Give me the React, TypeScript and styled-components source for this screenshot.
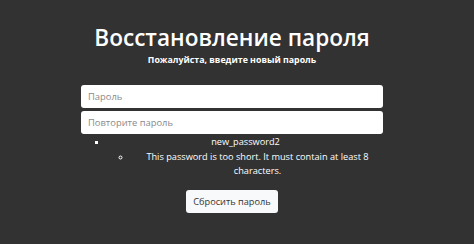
import styled, { createGlobalStyle } from 'styled-components';

const GlobalStyle = createGlobalStyle`
  html, body {
    margin: 0;
    padding: 0;
    background: #323232;
  }
  body {
    font-family: 'Open Sans', 'Noto Sans', sans-serif;
    color: #ffffff;
  }
`;

const Page = styled.main`
  width: 474px;
  height: 244px;
  display: flex;
  justify-content: center;
  padding: 22px 10px 0 0;
  box-sizing: border-box;
`;

const Panel = styled.div`
  width: 302px;
  display: flex;
  flex-direction: column;
  align-items: stretch;
  text-align: center;
`;

const Title = styled.h1`
  margin: 0;
  font-size: 22.6px;
  line-height: 32px;
  font-weight: 600;
`;

const Subtitle = styled.p`
  margin: 0 0 18px;
  font-size: 8.8px;
  line-height: 13px;
  font-weight: 700;
`;

const Form = styled.form`
  display: flex;
  flex-direction: column;
  gap: 3px;
`;

const Input = styled.input`
  width: 100%;
  height: 23px;
  box-sizing: border-box;
  border: none;
  border-radius: 3px;
  background: #ffffff;
  padding: 0 7px;
  font-family: inherit;
  font-size: 9.4px;
  color: #333;

  &::placeholder {
    color: #8a8a8a;
  }
`;

const ErrorList = styled.ul`
  margin: -2px 0 0;
  padding-left: 27px;
  font-size: 9.2px;
  line-height: 14.5px;
  list-style: square;

  ul {
    list-style: circle;
    padding-left: 24px;
    margin: 0;
  }
`;

const SubmitRow = styled.div`
  display: flex;
  justify-content: center;
  margin-top: 8px;
`;

const Button = styled.button`
  height: 23px;
  padding: 0 7px;
  border: none;
  border-radius: 3px;
  background: #f8f9fa;
  color: #333;
  font-family: inherit;
  font-size: 9.2px;
`;

export default function App() {
  return (
    <>
      <GlobalStyle />
      <Page>
        <Panel>
          <Title>Восстановление пароля</Title>
          <Subtitle>Пожалуйста, введите новый пароль</Subtitle>
          <Form onSubmit={(e) => e.preventDefault()}>
            <Input type="password" placeholder="Пароль" />
            <Input type="password" placeholder="Повторите пароль" />
            <ErrorList>
              <li>
                new_password2
                <ul>
                  <li>This password is too short. It must contain at least 8 characters.</li>
                </ul>
              </li>
            </ErrorList>
            <SubmitRow>
              <Button type="submit">Сбросить пароль</Button>
            </SubmitRow>
          </Form>
        </Panel>
      </Page>
    </>
  );
}
